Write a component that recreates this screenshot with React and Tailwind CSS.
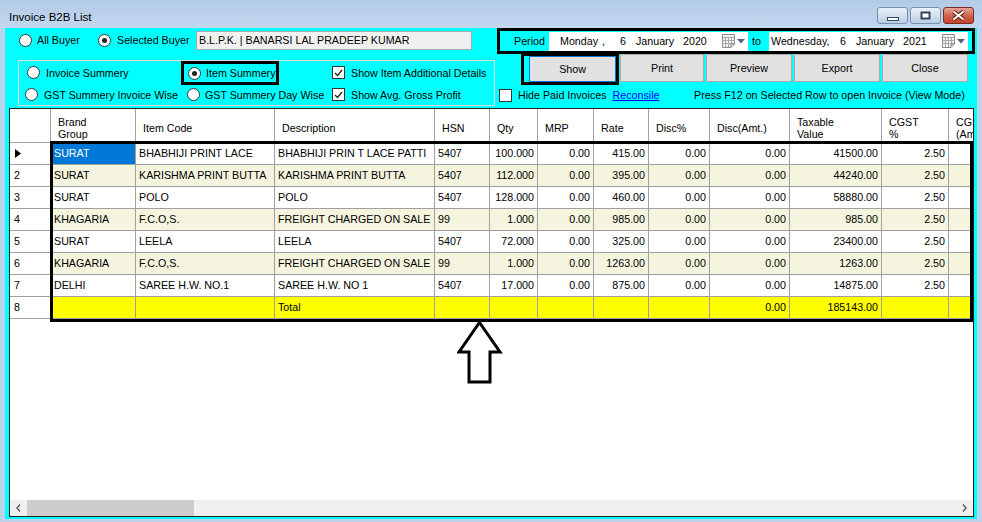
import React from "react";

const headers = [
  { w: "w-[85px]", t: ["Brand", "Group"] },
  { w: "w-[139px]", t: ["Item Code"] },
  { w: "w-[160px]", t: ["Description"] },
  { w: "w-[55px]", t: ["HSN"] },
  { w: "w-[48px]", t: ["Qty"] },
  { w: "w-[56px]", t: ["MRP"] },
  { w: "w-[55px]", t: ["Rate"] },
  { w: "w-[61px]", t: ["Disc%"] },
  { w: "w-[80px]", t: ["Disc(Amt.)"] },
  { w: "w-[92px]", t: ["Taxable", "Value"] },
  { w: "w-[67px]", t: ["CGST", "%"] },
  { w: "w-[80px]", t: ["CGST", "(Amt)"] },
];

// first four columns are text, the rest numbers
const rows = [
  ["SURAT", "BHABHIJI PRINT LACE", "BHABHIJI PRIN T LACE PATTI", "5407", "100.000", "0.00", "415.00", "0.00", "0.00", "41500.00", "2.50", ""],
  ["SURAT", "KARISHMA PRINT BUTTA", "KARISHMA PRINT BUTTA", "5407", "112.000", "0.00", "395.00", "0.00", "0.00", "44240.00", "2.50", ""],
  ["SURAT", "POLO", "POLO", "5407", "128.000", "0.00", "460.00", "0.00", "0.00", "58880.00", "2.50", ""],
  ["KHAGARIA", "F.C.O,S.", "FREIGHT CHARGED ON SALE", "99", "1.000", "0.00", "985.00", "0.00", "0.00", "985.00", "2.50", ""],
  ["SURAT", "LEELA", "LEELA", "5407", "72.000", "0.00", "325.00", "0.00", "0.00", "23400.00", "2.50", ""],
  ["KHAGARIA", "F.C.O,S.", "FREIGHT CHARGED ON SALE", "99", "1.000", "0.00", "1263.00", "0.00", "0.00", "1263.00", "2.50", ""],
  ["DELHI", "SAREE H.W. NO.1", "SAREE H.W. NO 1", "5407", "17.000", "0.00", "875.00", "0.00", "0.00", "14875.00", "2.50", ""],
  ["", "", "Total", "", "", "", "", "", "0.00", "185143.00", "", ""],
];

function Radio({ checked }) {
  return (
    <span className="w-[13px] h-[13px] rounded-full border border-[#333] bg-white flex items-center justify-center shrink-0">
      {checked && <span className="w-[5px] h-[5px] rounded-full bg-[#222]" />}
    </span>
  );
}

function Check({ checked }) {
  return (
    <span className="w-[13px] h-[13px] border border-[#333] bg-white flex items-center justify-center shrink-0">
      {checked && (
        <svg width="9" height="8" viewBox="0 0 9 8">
          <path d="M1 4 L3.5 6.5 L8 1" fill="none" stroke="#222" strokeWidth="1.3" />
        </svg>
      )}
    </span>
  );
}

function CalIcon() {
  return (
    <span className="flex items-center gap-[2px]">
      <svg width="13" height="14" viewBox="0 0 13 14">
        <path d="M0.5 0.5 H12.5 V10 L9 13.5 H0.5 Z" fill="#f2f2f2" stroke="#8a8a8a" />
        <path d="M0.5 3.5 H12.5 M3.5 3.5 V13 M6.5 3.5 V13 M9.5 3.5 V11 M0.5 6.5 H12.5 M0.5 9.5 H12" stroke="#a8a8a8" />
        <path d="M12.5 10 H9 V13.5" fill="#d8d8d8" stroke="#8a8a8a" />
      </svg>
      <svg width="8" height="5" viewBox="0 0 8 5">
        <path d="M0 0 H8 L4 4.5 Z" fill="#4c6388" />
      </svg>
    </span>
  );
}

function CaptionButton({ kind }) {
  const base =
    kind === "close"
      ? "bg-linear-to-b from-[#e6a595] via-[#d0634e] to-[#c2442f] border-[#7a2c22]"
      : "bg-linear-to-b from-[#eaf1f9] via-[#d3e0ef] to-[#b9cde5] border-[#7990b0]";
  return (
    <div className={`w-[31px] h-[17px] border rounded-[3px] flex items-center justify-center ${base}`}>
      {kind === "min" && <span className="mt-[6px] w-[12px] h-[4px] bg-white border border-[#34465f]" />}
      {kind === "max" && (
        <svg width="11" height="9" viewBox="0 0 11 9">
          <rect x="0.5" y="0.5" width="10" height="8" fill="#34465f" />
          <rect x="2.5" y="2.5" width="6" height="4" fill="#fff" />
        </svg>
      )}
      {kind === "close" && (
        <svg width="15" height="11" viewBox="0 0 15 11">
          <path d="M2.5 1.5 L12.5 9.5 M12.5 1.5 L2.5 9.5" stroke="#5a1d15" strokeWidth="4" />
          <path d="M2.5 1.5 L12.5 9.5 M12.5 1.5 L2.5 9.5" stroke="#fff" strokeWidth="2" />
        </svg>
      )}
    </div>
  );
}

function DatePicker({ parts }) {
  return (
    <div className="w-[199px] h-[19px] bg-white flex items-center whitespace-nowrap">
      {parts.map((p, i) => (
        <span key={i} className={p.c}>{p.t}</span>
      ))}
      <CalIcon />
    </div>
  );
}

function Btn({ children, extra }) {
  return (
    <div className={`h-[28px] mt-[1px] bg-[#e1e1e1] border border-[#adadad] flex items-center justify-center ${extra}`}>
      {children}
    </div>
  );
}

function Grid() {
  return (
    <div className="ml-[4px] mr-[3px] h-[409px] border border-[#222] bg-white flex flex-col overflow-hidden relative">
      <div className="flex-1 overflow-hidden">
        <div className="w-[1019px]">
          <div className="flex h-[34px]">
            <div className="w-[41px] border-r border-b border-[#a0a0a0]" />
            {headers.map((h, i) => (
              <div key={i} className={`${h.w} border-r border-b border-[#a0a0a0] pl-[7px] pt-[4px] flex flex-col justify-center leading-[12px] whitespace-nowrap`}>
                {h.t.map((l, j) => (
                  <span key={j}>{l}</span>
                ))}
              </div>
            ))}
          </div>
          {rows.map((r, ri) => {
            const total = ri === rows.length - 1;
            const bg = total ? "bg-[#ffff00]" : ri % 2 === 1 ? "bg-[#f5f4de]" : "bg-white";
            return (
              <div key={ri} className="flex h-[22px]">
                <div className="w-[41px] border-r border-b border-[#a0a0a0] pl-[4px] flex items-center">
                  {ri === 0 ? (
                    <svg width="6" height="9" viewBox="0 0 6 9" className="ml-[1px]">
                      <path d="M0 0 L6 4.5 L0 9 Z" fill="#000" />
                    </svg>
                  ) : (
                    ri + 1
                  )}
                </div>
                {r.map((v, ci) => {
                  const sel = ri === 0 && ci === 0;
                  const align = ci < 4 ? "justify-start pl-[3px]" : "justify-end pr-[3px]";
                  return (
                    <div
                      key={ci}
                      className={`${headers[ci].w} border-r border-b border-[#a0a0a0] flex items-center whitespace-nowrap overflow-hidden ${align} ${sel ? "bg-[#0078d7] text-white" : bg}`}
                    >
                      {v}
                    </div>
                  );
                })}
              </div>
            );
          })}
          <div className="pl-[447px] pt-[2px]">
            <svg width="46" height="66" viewBox="0 0 46 66">
              <path d="M22.5 1.5 L43 31 L33 31 L33 61 L12 61 L12 31 L2 31 Z" fill="#fff" stroke="#000" strokeWidth="3" strokeLinejoin="miter" />
            </svg>
          </div>
        </div>
      </div>
      <div className="h-[16px] bg-[#f0f0f0] flex items-center shrink-0">
        <span className="w-[17px] flex justify-center">
          <svg width="5" height="8" viewBox="0 0 5 8"><path d="M4 0.5 L1 4 L4 7.5" fill="none" stroke="#606060" strokeWidth="1.5" /></svg>
        </span>
        <span className="w-[167px] h-[16px] bg-[#cdcdcd]" />
        <span className="flex-1" />
        <span className="w-[17px] flex justify-center">
          <svg width="5" height="8" viewBox="0 0 5 8"><path d="M1 0.5 L4 4 L1 7.5" fill="none" stroke="#606060" strokeWidth="1.5" /></svg>
        </span>
      </div>
      <div className="absolute left-[40px] top-[32px] w-[923px] h-[181px] border-[3px] border-black pointer-events-none" />
    </div>
  );
}

export default function App() {
  return (
    <div className="w-[982px] h-[522px] bg-[#bdd3ec] flex flex-col overflow-hidden font-['Liberation_Sans',Arial,sans-serif] text-[10.7px] text-black">
      <div className="h-[28px] flex items-start bg-linear-to-b from-[#b3cae6] to-[#c3d7ef] shrink-0">
        <span className="flex-1 pl-[9px] pt-[10px] text-[11.5px] leading-[14px]">Invoice B2B List</span>
        <div className="flex gap-[2px] mt-[7px] mr-[8px]">
          <CaptionButton kind="min" />
          <CaptionButton kind="max" />
          <CaptionButton kind="close" />
        </div>
      </div>
      <div className="flex-1 mx-[5px] mb-[3px] bg-[#00ffff] flex flex-col">
        <div className="flex h-[80px] shrink-0 whitespace-nowrap">
          <div className="w-[492px] flex flex-col">
            <div className="flex items-center h-[19px] mt-[3px]">
              <div className="w-[79px] ml-[14px] flex items-center gap-[5px]">
                <Radio />
                <span>All Buyer</span>
              </div>
              <div className="w-[98px] flex items-center gap-[6px]">
                <Radio checked />
                <span>Selected Buyer</span>
              </div>
              <div className="w-[276px] h-[19px] bg-[#f0f0f0] border border-[#a9a9a9] flex items-center pl-[2px]">
                B.L.P.K. | BANARSI LAL PRADEEP KUMAR
              </div>
            </div>
            <div className="ml-[13px] mt-[10px] w-[477px] h-[46px] border border-[#dcdcdc] flex flex-col">
              <div className="flex items-center h-[24px]">
                <div className="w-[162px] pl-[8px] flex items-center gap-[6px]">
                  <Radio />
                  <span>Invoice Summery</span>
                </div>
                <div className="w-[98px] h-[24px] border-[3px] border-black flex items-center pl-[4px] gap-[5px]">
                  <Radio checked />
                  <span>Item Summery</span>
                </div>
                <div className="ml-[53px] flex items-center gap-[6px]">
                  <Check checked />
                  <span>Show Item Additional Details</span>
                </div>
              </div>
              <div className="flex items-center h-[20px]">
                <div className="w-[168px] pl-[6px] flex items-center gap-[6px]">
                  <Radio />
                  <span>GST Summery Invoice Wise</span>
                </div>
                <div className="w-[145px] flex items-center gap-[5px]">
                  <Radio />
                  <span>GST Summery Day Wise</span>
                </div>
                <div className="flex items-center gap-[6px]">
                  <Check checked />
                  <span>Show Avg. Gross Profit</span>
                </div>
              </div>
            </div>
          </div>
          <div className="w-[480px] flex flex-col">
            <div className="w-[478px] h-[26px] border-[3px] border-black flex items-center">
              <div className="w-[49px] pl-[14px]">Period</div>
              <DatePicker
                parts={[
                  { t: "Monday", c: "w-[53px] pl-[11px]" },
                  { t: ",", c: "w-[18px]" },
                  { t: "6", c: "w-[16px]" },
                  { t: "January", c: "w-[47px]" },
                  { t: "2020", c: "w-[39px]" },
                ]}
              />
              <div className="w-[21px] pl-[4px]">to</div>
              <DatePicker
                parts={[
                  { t: "Wednesday,", c: "w-[71px] pl-[2px]" },
                  { t: "6", c: "w-[16px]" },
                  { t: "January", c: "w-[47px]" },
                  { t: "2021", c: "w-[39px]" },
                ]}
              />
            </div>
            <div className="flex mt-[-1px] h-[32px]">
              <div className="ml-[24px] w-[98px] h-[32px] border-[3px] border-black pl-[5px]">
                <div className="w-[87px] h-[26px] bg-[#e1e1e1] border border-[#0078d7] flex items-center justify-center">Show</div>
              </div>
              <Btn extra="ml-[1px] w-[84px]">Print</Btn>
              <Btn extra="ml-[2px] w-[86px]">Preview</Btn>
              <Btn extra="ml-[2px] w-[86px]">Export</Btn>
              <Btn extra="ml-[2px] w-[86px]">Close</Btn>
            </div>
            <div className="flex items-center h-[14px] mt-[3px]">
              <div className="ml-[2px] w-[195px] flex items-center">
                <Check />
                <span className="ml-[6px]">Hide Paid Invoices</span>
                <span className="ml-[6px] text-[#0000ff] underline">Reconsile</span>
              </div>
              <span>Press F12 on Selected Row to open Invoice (View Mode)</span>
            </div>
          </div>
        </div>
        <Grid />
      </div>
    </div>
  );
}
